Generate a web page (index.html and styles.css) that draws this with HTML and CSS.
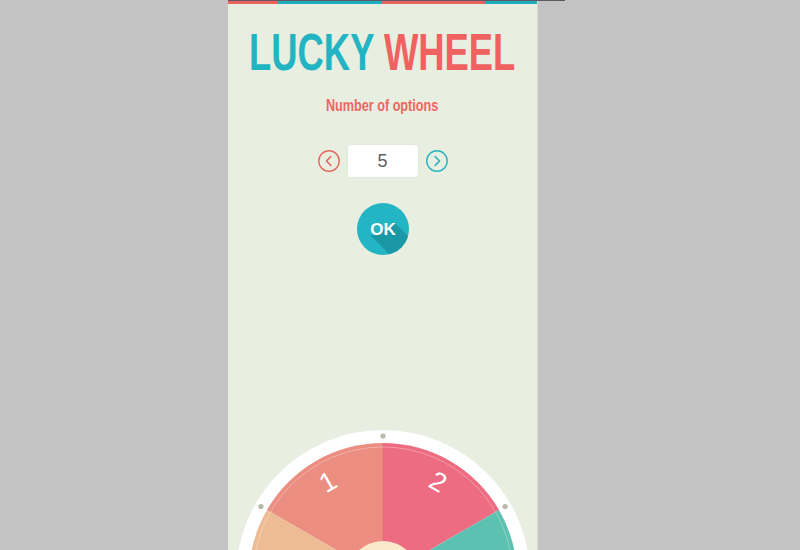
FILE: index.html
```html
<!DOCTYPE html>
<html lang="en">
<head>
    <meta charset="utf-8">
    <meta name="viewport" content="width=device-width, initial-scale=1.0">
    <title>Lucky Wheel</title>
    <link rel="stylesheet" href="styles.css">
</head>
<body>
    <div class="frame-line"></div>
    <div class="page">
        <div class="stripes"></div>
        <h1 class="title"><span class="lucky">LUCKY</span> <span class="wheel-word">WHEEL</span></h1>
        <div class="label">Number of options</div>
        <div class="stepper">
            <button class="arrow arrow-left">
                <svg width="22" height="22" viewBox="0 0 22 22">
                    <circle cx="11" cy="11" r="10.2" fill="none" stroke="rgb(232,102,96)" stroke-width="1.4"/>
                    <path d="M12.8 6.6 L8.4 11 L12.8 15.4" fill="none" stroke="rgb(232,102,96)" stroke-width="1.5" stroke-linecap="round" stroke-linejoin="round"/>
                </svg>
            </button>
            <div class="count">5</div>
            <button class="arrow arrow-right">
                <svg width="22" height="22" viewBox="0 0 22 22">
                    <circle cx="11" cy="11" r="10.2" fill="none" stroke="rgb(40,178,192)" stroke-width="1.4"/>
                    <path d="M9.2 6.6 L13.6 11 L9.2 15.4" fill="none" stroke="rgb(40,178,192)" stroke-width="1.5" stroke-linecap="round" stroke-linejoin="round"/>
                </svg>
            </button>
        </div>
        <button class="ok">
            <svg width="52" height="52" viewBox="0 0 52 52">
                <defs>
                    <clipPath id="okclip"><circle cx="26" cy="26" r="26"/></clipPath>
                </defs>
                <circle cx="26" cy="26" r="26" fill="rgb(35,181,196)"/>
                <polygon points="38,20 80,62 56,75 14,33" fill="rgb(27,152,166)" clip-path="url(#okclip)"/>
                <text x="26" y="32" text-anchor="middle" class="ok-text">OK</text>
            </svg>
        </button>
        <div class="wheel">
            <svg width="310" height="130" viewBox="0 0 310 130">
                <circle cx="155" cy="157" r="147" fill="#fff"/>
                <path d="M155 157 L38.95 90 A134 134 0 0 1 155 23 Z" fill="rgb(235,142,129)"/>
                <path d="M155 157 L155 23 A134 134 0 0 1 271.05 90 Z" fill="rgb(238,108,129)"/>
                <path d="M155 157 L271.05 90 A134 134 0 0 1 271.05 224 Z" fill="rgb(92,193,176)"/>
                <path d="M155 157 L38.95 224 A134 134 0 0 1 38.95 90 Z" fill="rgb(237,188,148)"/>
                <line x1="155" y1="157" x2="155" y2="23" stroke="rgba(200,110,110,0.3)" stroke-width="1"/>
                <circle cx="155" cy="157" r="130" fill="none" stroke="rgba(255,255,255,0.3)" stroke-width="1"/>
                <circle cx="155" cy="16" r="2.6" fill="rgb(183,186,168)"/>
                <circle cx="277.1" cy="86.5" r="2.6" fill="rgb(183,186,168)"/>
                <circle cx="32.9" cy="86.5" r="2.6" fill="rgb(183,186,168)"/>
                <text class="num" x="100" y="62" transform="rotate(-30 100 62)" text-anchor="middle" dy="9">1</text>
                <text class="num" x="210" y="62" transform="rotate(30 210 62)" text-anchor="middle" dy="9">2</text>
                <circle cx="155" cy="157" r="36" fill="rgb(251,233,203)"/>
            </svg>
        </div>
    </div>
</body>
</html>
```

FILE: styles.css
```css
html, body{
    margin: 0;
    padding: 0;
}
body{
    background-color: rgb(195,195,195);
    height: 550px;
    overflow: hidden;
    font-family: "Liberation Sans", Arial, sans-serif;
}
.frame-line{
    position: absolute;
    top: 0;
    left: 228px;
    width: 337px;
    height: 1px;
    background-color: rgb(95,88,98);
}
.page{
    margin-left: 228px;
    width: 309px;
    height: 550px;
    background-color: rgb(232,238,224);
    border-right: 1px solid rgb(214,219,205);
    display: flex;
    flex-direction: column;
    align-items: center;
}
.stripes{
    align-self: stretch;
    height: 4px;
    background: linear-gradient(to right,
        rgb(232,98,94) 0, rgb(232,98,94) 50px,
        rgb(31,172,188) 50px, rgb(31,172,188) 154px,
        rgb(232,98,94) 154px, rgb(232,98,94) 257px,
        rgb(31,172,188) 257px);
}
/* no narrow font installed, so squeeze the bold face */
.title{
    margin: 19px 0 0;
    font-family: "Liberation Sans", Arial, sans-serif;
    font-weight: bold;
    font-size: 52px;
    line-height: 58px;
    white-space: nowrap;
    transform: scaleX(0.7);
}
.lucky{
    color: rgb(35,180,196);
}
.wheel-word{
    color: rgb(240,98,96);
}
.label{
    margin-top: 16px;
    font-family: "Liberation Sans", Arial, sans-serif;
    font-weight: bold;
    font-size: 16px;
    line-height: 18px;
    color: rgb(236,102,98);
    white-space: nowrap;
    transform: scaleX(0.79);
}
.stepper{
    margin-top: 30px;
    display: flex;
    align-items: center;
    gap: 8px;
}
.arrow{
    border: none;
    background: none;
    padding: 0;
    width: 22px;
    height: 22px;
    display: block;
}
.arrow svg{
    display: block;
}
.count{
    width: 70px;
    height: 32px;
    background-color: #fff;
    border-radius: 3px;
    box-shadow: 0 0 2px rgba(0,0,0,0.08);
    text-align: center;
    line-height: 32px;
    font-size: 18px;
    color: rgb(95,95,95);
}
.ok{
    margin-top: 26px;
    border: none;
    background: none;
    padding: 0;
    width: 52px;
    height: 52px;
}
.ok svg{
    display: block;
}
.ok-text{
    font-family: "Liberation Sans", Arial, sans-serif;
    font-weight: bold;
    font-size: 17px;
    fill: #fff;
}
.wheel{
    margin-top: 165px;
    width: 310px;
    height: 130px;
}
.wheel svg{
    display: block;
}
.num{
    font-family: "Liberation Sans", Arial, sans-serif;
    font-size: 27px;
    fill: #fff;
}
```
